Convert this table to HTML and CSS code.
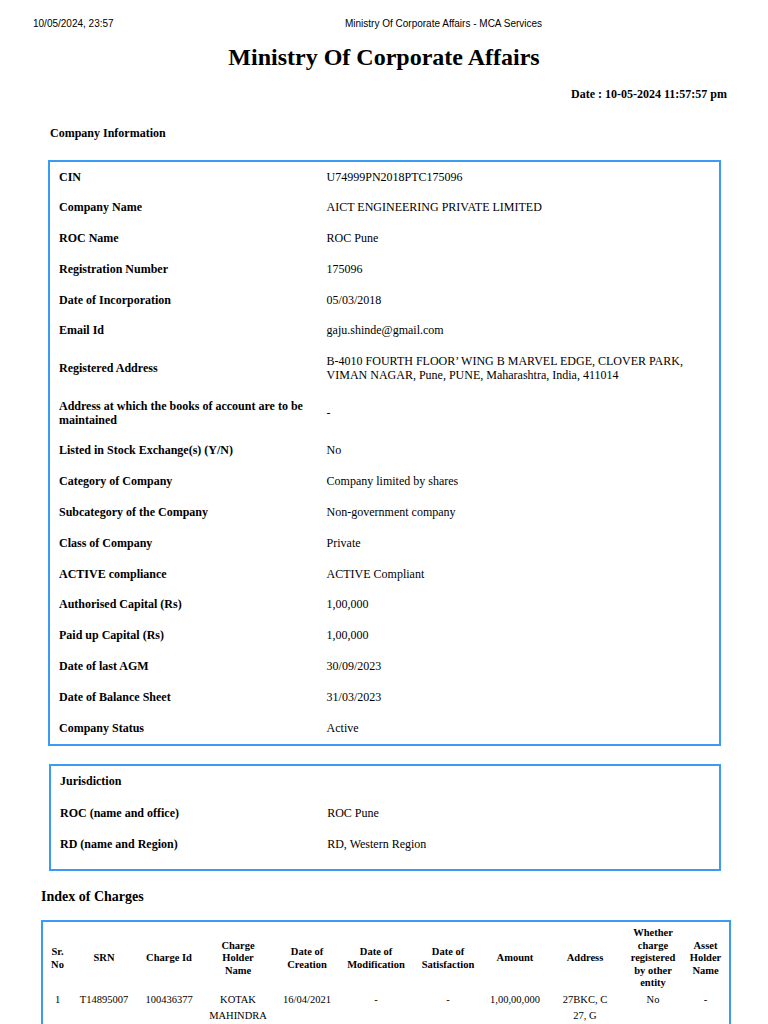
FILE: index.html
```html
<!DOCTYPE html>
<html lang="en">
<head>
<meta charset="utf-8">
<title>Ministry Of Corporate Affairs - MCA Services</title>
<link rel="stylesheet" href="styles.css">
</head>
<body>
<div class="print-head">
  <span>10/05/2024, 23:57</span>
  <span>Ministry Of Corporate Affairs - MCA Services</span>
</div>
<h1 class="title">Ministry Of Corporate Affairs</h1>
<div class="date">Date : 10-05-2024 11:57:57 pm</div>
<h2 class="section-label">Company Information</h2>
<div class="box company">
  <table class="info">
    <colgroup><col class="col-label"><col></colgroup>
    <tr><th>CIN</th><td>U74999PN2018PTC175096</td></tr>
    <tr><th>Company Name</th><td>AICT ENGINEERING PRIVATE LIMITED</td></tr>
    <tr><th>ROC Name</th><td>ROC Pune</td></tr>
    <tr><th>Registration Number</th><td>175096</td></tr>
    <tr><th>Date of Incorporation</th><td>05/03/2018</td></tr>
    <tr><th>Email Id</th><td>gaju.shinde@gmail.com</td></tr>
    <tr><th>Registered Address</th><td>B-4010 FOURTH FLOOR’ WING B MARVEL EDGE, CLOVER PARK,<br>VIMAN NAGAR, Pune, PUNE, Maharashtra, India, 411014</td></tr>
    <tr><th>Address at which the books of account are to be<br>maintained</th><td>-</td></tr>
    <tr><th>Listed in Stock Exchange(s) (Y/N)</th><td>No</td></tr>
    <tr><th>Category of Company</th><td>Company limited by shares</td></tr>
    <tr><th>Subcategory of the Company</th><td>Non-government company</td></tr>
    <tr><th>Class of Company</th><td>Private</td></tr>
    <tr><th>ACTIVE compliance</th><td>ACTIVE Compliant</td></tr>
    <tr><th>Authorised Capital (Rs)</th><td>1,00,000</td></tr>
    <tr><th>Paid up Capital (Rs)</th><td>1,00,000</td></tr>
    <tr><th>Date of last AGM</th><td>30/09/2023</td></tr>
    <tr><th>Date of Balance Sheet</th><td>31/03/2023</td></tr>
    <tr><th>Company Status</th><td>Active</td></tr>
  </table>
</div>
<div class="box juris">
  <table class="info">
    <colgroup><col class="col-label"><col></colgroup>
    <tr class="juris-head"><th colspan="2">Jurisdiction</th></tr>
    <tr><th>ROC (name and office)</th><td>ROC Pune</td></tr>
    <tr><th>RD (name and Region)</th><td>RD, Western Region</td></tr>
  </table>
</div>
<h2 class="charges-label">Index of Charges</h2>
<div class="box charges">
  <table class="charges-table">
    <colgroup>
      <col class="c-sr"><col class="c-srn"><col class="c-id"><col class="c-holder"><col class="c-create"><col class="c-mod"><col class="c-sat"><col class="c-amt"><col class="c-addr"><col class="c-whether"><col class="c-asset">
    </colgroup>
    <thead>
      <tr>
        <th>Sr.<br>No</th>
        <th>SRN</th>
        <th>Charge Id</th>
        <th>Charge<br>Holder<br>Name</th>
        <th>Date of<br>Creation</th>
        <th>Date of<br>Modification</th>
        <th>Date of<br>Satisfaction</th>
        <th>Amount</th>
        <th>Address</th>
        <th>Whether<br>charge<br>registered<br>by other<br>entity</th>
        <th>Asset<br>Holder<br>Name</th>
      </tr>
    </thead>
    <tbody>
      <tr>
        <td>1</td>
        <td>T14895007</td>
        <td>100436377</td>
        <td>KOTAK<br>MAHINDRA</td>
        <td>16/04/2021</td>
        <td>-</td>
        <td>-</td>
        <td>1,00,00,000</td>
        <td>27BKC, C<br>27, G</td>
        <td>No</td>
        <td>-</td>
      </tr>
    </tbody>
  </table>
</div>
</body>
</html>
```

FILE: styles.css
```css
* { box-sizing: border-box; }
html, body { margin: 0; padding: 0; background: #fff; }
body {
  font-family: "Liberation Serif", "Times New Roman", serif;
  color: #000;
  width: 768px;
}
.print-head {
  display: grid;
  grid-template-columns: 312px auto;
  padding: 18px 0 0 33px;
  font-family: "Liberation Sans", Arial, sans-serif;
  font-size: 10px;
  line-height: 12px;
}
.title {
  margin: 13px 0 0;
  font-size: 24px;
  line-height: 28px;
  font-weight: bold;
  text-align: center;
}
.date {
  margin-top: 16px;
  padding-right: 41px;
  text-align: right;
  font-size: 12px;
  line-height: 14px;
  font-weight: bold;
}
.section-label {
  margin: 25px 0 0 50px;
  font-size: 12px;
  line-height: 14px;
  font-weight: bold;
}
.box {
  border: 2px solid #3a9bf2;
}
.company {
  margin: 20px 47px 0 48px;
}
.juris {
  margin: 18px 47px 0 49px;
  padding-bottom: 9px;
}
.info {
  width: 100%;
  border-collapse: collapse;
  table-layout: fixed;
  font-size: 12px;
  line-height: 13.8px;
}
.col-label { width: 40%; }
.info th, .info td {
  padding: 8.5px 9px;
  text-align: left;
  vertical-align: middle;
}
.info th { font-weight: bold; }
.info td { font-weight: normal; }
.juris-head th { padding-top: 9.5px; padding-bottom: 9.5px; }
.charges-label {
  margin: 18px 0 0 41px;
  font-size: 14px;
  line-height: 16px;
  font-weight: bold;
}
.charges {
  margin: 15px 37px 0 41px;
}
.charges-table {
  width: 100%;
  border-collapse: collapse;
  table-layout: fixed;
  font-size: 10.5px;
}
.charges-table th, .charges-table td {
  text-align: center;
}
.charges-table th {
  padding: 5px 0 1px;
  font-weight: bold;
  line-height: 12.5px;
  vertical-align: middle;
}
.charges-table td {
  padding: 1px 0 5px;
  font-weight: normal;
  line-height: 16px;
  vertical-align: top;
}
.c-sr { width: 29px; }
.c-srn { width: 64px; }
.c-id { width: 66px; }
.c-holder { width: 72px; }
.c-create { width: 66px; }
.c-mod { width: 72px; }
.c-sat { width: 72px; }
.c-amt { width: 62px; }
.c-addr { width: 78px; }
.c-whether { width: 58px; }
.c-asset { width: 47px; }
```
